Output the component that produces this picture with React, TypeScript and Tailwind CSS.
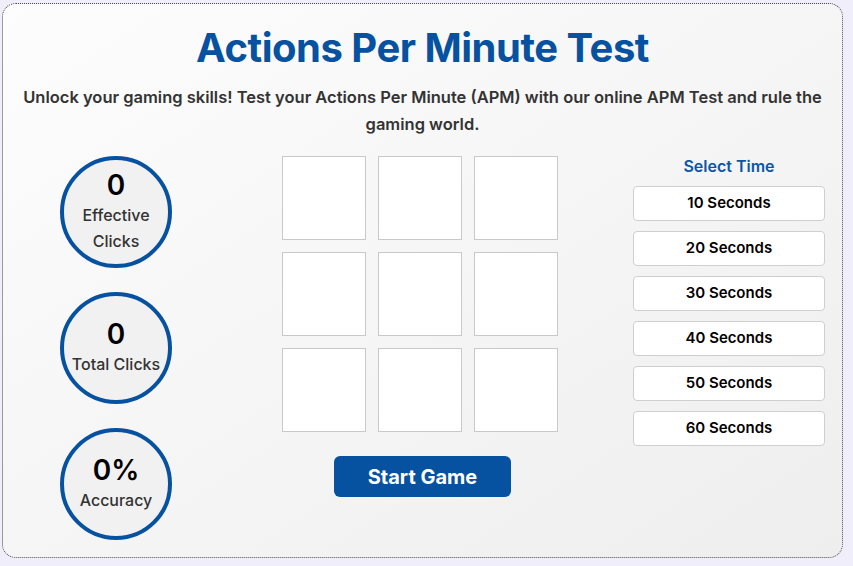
import React from "react";

const font = { fontFamily: "Inter, 'Noto Sans', sans-serif" };

function Stat({ value, label }: { value: string; label: React.ReactNode }) {
  return (
    <div className="w-[112px] h-[112px] rounded-full border-[4px] border-[#0652a0] bg-[#f1f1f1] flex flex-col items-center justify-center">
      <div className="text-[28px] font-semibold leading-[30px] text-black">{value}</div>
      <div className="mt-[2px] text-[16px] font-medium leading-[26px] text-[#333] text-center whitespace-nowrap">{label}</div>
    </div>
  );
}

export default function App() {
  const times = [10, 20, 30, 40, 50, 60];
  return (
    <div className="w-[853px] h-[566px] bg-[#f0eefb] overflow-hidden" style={font}>
      <div className="ml-[2px] mt-[3px] w-[841px] h-[555px] rounded-[14px] border border-dotted border-[#444] bg-gradient-to-br from-[#fdfdfd] to-[#eeeeee] flex flex-col">
        <h1 className="mt-[22px] text-center text-[40px] leading-[44px] font-bold text-[#0652a0] tracking-[-0.5px]">
          Actions Per Minute Test
        </h1>
        <p className="mt-[14px] px-[18px] text-center text-[16.5px] leading-[27px] font-semibold text-[#333]">
          Unlock your gaming skills! Test your Actions Per Minute (APM) with our online APM Test and rule the gaming world.
        </p>
        <div className="mt-[18px] flex items-start">
          <div className="ml-[57px] flex flex-col gap-[24px]">
            <Stat value="0" label={<>Effective<br />Clicks</>} />
            <Stat value="0" label="Total Clicks" />
            <Stat value="0%" label="Accuracy" />
          </div>
          <div className="ml-[110px] flex flex-col items-center">
            <div className="grid grid-cols-3 gap-[12px]">
              {Array.from({ length: 9 }).map((_, i) => (
                <div key={i} className="w-[84px] h-[84px] bg-white border border-[#c9c9c9]" />
              ))}
            </div>
            <button className="mt-[24px] ml-[5px] w-[177px] h-[41px] rounded-[6px] bg-[#0652a0] text-white text-[20px] font-bold">
              Start Game
            </button>
          </div>
          <div className="ml-[75px] w-[192px] flex flex-col">
            <div className="h-[20px] text-center text-[16px] leading-[20px] font-semibold text-[#0a56a6]">Select Time</div>
            <div className="mt-[10px] flex flex-col gap-[10px]">
              {times.map((t) => (
                <button key={t} className="h-[35px] w-full rounded-[4px] bg-white border border-[#cfcfcf] text-[15px] font-semibold text-black">
                  {t} Seconds
                </button>
              ))}
            </div>
          </div>
        </div>
      </div>
    </div>
  );
}
